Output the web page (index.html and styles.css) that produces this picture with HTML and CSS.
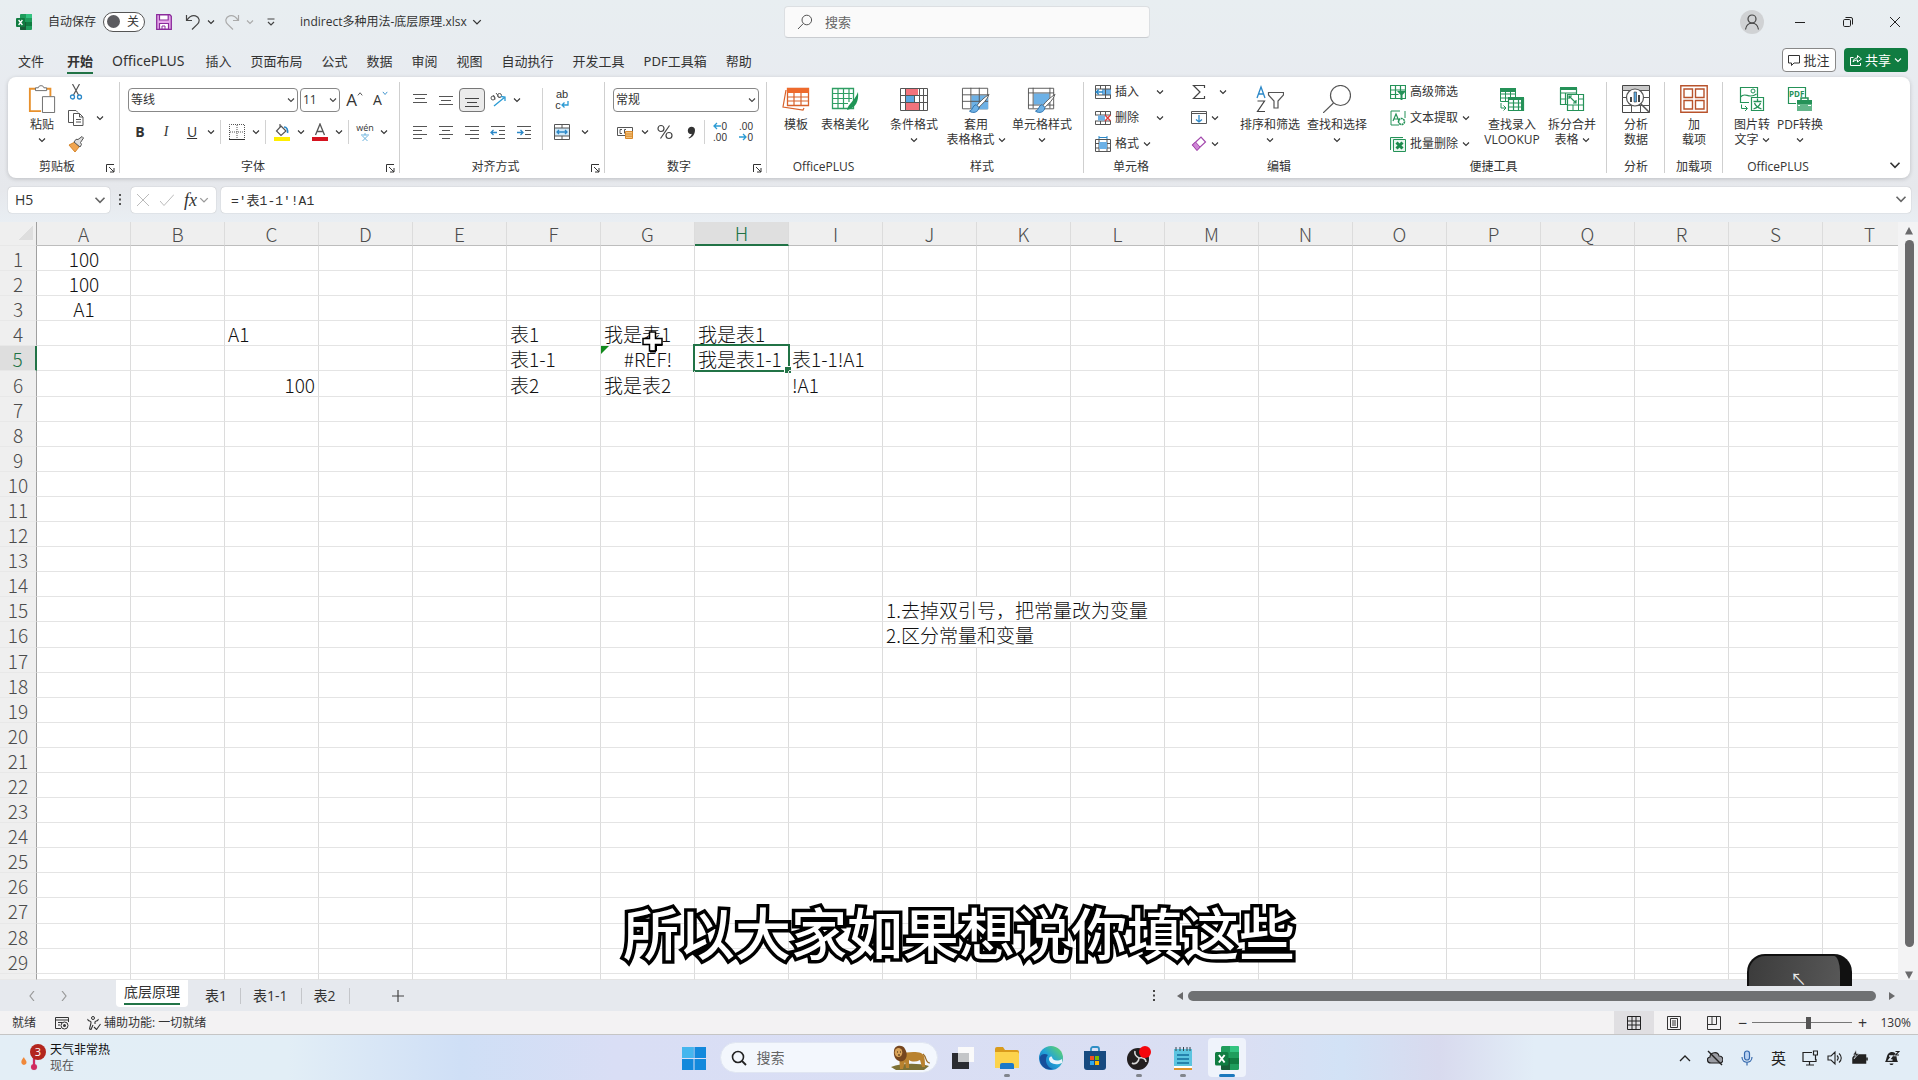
FILE: index.html
```html
<!DOCTYPE html>
<html lang="zh-CN">
<head>
	<meta charset="utf-8">
	<title>indirect多种用法-底层原理.xlsx</title>
	<link rel="stylesheet" href="styles.css">
</head>
<body>
	<!-- shared icons -->
	<svg class="sprite">
		<symbol id="chev" viewBox="0 0 8 8"><path d="M1 2.5l3 3 3-3" fill="none" stroke="currentColor" stroke-width="1.1"/></symbol>
		<symbol id="launch" viewBox="0 0 9 9"><path d="M.5 8V.5H8M3 3l5 5M8 4v4H4" fill="none" stroke="currentColor"/></symbol>
		<symbol id="excel" viewBox="0 0 16 16">
			<path d="M5 0h10a1 1 0 0 1 1 1v14a1 1 0 0 1-1 1H5a1 1 0 0 1-1-1V1a1 1 0 0 1 1-1z" fill="#1f9d5c"/>
			<path d="M10 0h5a1 1 0 0 1 1 1v3h-6z" fill="#33c481"/><path d="M4 8h6v8H5a1 1 0 0 1-1-1z" fill="#185c37"/><path d="M10 8h6v4h-6z" fill="#107c41"/>
			<rect y="4" width="9" height="9" rx="1" fill="#107c41"/><path d="M2.6 6l3.8 5M6.4 6l-3.8 5" stroke="#fff" stroke-width="1.3"/>
		</symbol>
	</svg>

	<header class="titlebar">
		<div class="title-left">
			<svg class="i16"><use href="#excel"/></svg>
			<label class="autosave">自动保存 <input type="checkbox" role="switch"><span class="switch">关</span></label>
			<button class="save" aria-label="保存"><svg class="i16" viewBox="0 0 16 16"><path d="M.7.7h13.1l1.5 1.5v13.1H.7z" fill="#e6a8ea" stroke="#8b2c9c" stroke-width="1.3"/><path d="M3.5 1h8.7v5H3.5zM3.5 9.5h9V15h-9z" fill="#fff" stroke="#8b2c9c" stroke-width="1.2"/><path d="M6 15v-3h3v3" fill="none" stroke="#8b2c9c"/></svg></button>
			<button class="undo" aria-label="撤消"><svg class="i16" viewBox="0 0 16 16"><path d="M1.5 1v5.5H7M1.8 6.3C4 3 7 .8 10.5 1.8c4 1.2 4.7 5.7 2 8.4L7 15.5" fill="none" stroke="#444" stroke-width="1.2"/></svg><svg class="chev"><use href="#chev"/></svg></button>
			<button class="redo" aria-label="恢复"><svg class="i16" viewBox="0 0 16 16"><path d="M14.5 1v5.5H9M14.2 6.3C12 3 9 .8 5.5 1.8c-4 1.2-4.7 5.7-2 8.4L9 15.5" fill="none" stroke="#aaa" stroke-width="1.2"/></svg><svg class="chev"><use href="#chev"/></svg></button>
			<button class="custom" aria-label="自定义快速访问工具栏"><svg class="chev" viewBox="0 0 8 8"><path d="M.5 1h7M1 4l3 3 3-3" fill="none" stroke="#444" stroke-width="1.2"/></svg></button>
			<button class="filename">indirect多种用法-底层原理.xlsx <svg class="i10"><use href="#chev"/></svg></button>
		</div>
		<label class="search">
			<svg class="i16" viewBox="0 0 16 16"><circle cx="9.8" cy="6" r="4.8" fill="none" stroke="#555"/><path d="M6.3 9.5L1 15" stroke="#555"/></svg>
			<input type="text" placeholder="搜索" aria-label="搜索">
		</label>
		<div class="title-right">
			<button class="avatar" aria-label="帐户"><svg class="i16" viewBox="0 0 16 16"><circle cx="8" cy="5" r="4" fill="none" stroke="#444" stroke-width="1.2"/><path d="M1.5 15.5C2.5 7 13.5 7 14.5 15.5" fill="none" stroke="#444" stroke-width="1.2"/></svg></button>
			<button class="win" aria-label="最小化"><svg class="i10" viewBox="0 0 10 10"><path d="M0 5.5h10" stroke="#222"/></svg></button>
			<button class="win" aria-label="还原"><svg class="i10" viewBox="0 0 10 10"><rect x=".5" y="2.5" width="7" height="7" rx="1.2" fill="none" stroke="#222"/><path d="M2.5.5H8A1.5 1.5 0 0 1 9.5 2v5.5" fill="none" stroke="#222"/></svg></button>
			<button class="win" aria-label="关闭"><svg class="i10" viewBox="0 0 10 10"><path d="M0 0l10 10M10 0L0 10" stroke="#222"/></svg></button>
		</div>
	</header>

	<nav class="tabs">
		<a href="#">文件</a>
		<a href="#" class="active">开始</a>
		<a href="#" class="addin">OfficePLUS</a>
		<a href="#">插入</a>
		<a href="#">页面布局</a>
		<a href="#">公式</a>
		<a href="#">数据</a>
		<a href="#">审阅</a>
		<a href="#">视图</a>
		<a href="#">自动执行</a>
		<a href="#">开发工具</a>
		<a href="#">PDF工具箱</a>
		<a href="#">帮助</a>
		<button class="comment"><svg class="i12" viewBox="0 0 12 12"><path d="M.5 1.5h11V9H6l-2.5 2.5V9h-3z" fill="none" stroke="#333"/></svg>批注</button>
		<button class="share"><svg class="i12" viewBox="0 0 12 12"><path d="M3.5 3.5h-3v8h10V9M3 8c.5-3 2-4 4.5-4V1.5L11.5 5 7.5 8V6C5.5 6 4.5 6.5 3 8z" fill="none" stroke="#fff"/></svg>共享<svg class="chev"><use href="#chev"/></svg></button>
	</nav>

	<section class="ribbon">
		<div class="group clipboard">
			<div class="body">
				<button class="big"><svg class="i30" viewBox="0 0 28 30"><path d="M7 4H1v24h12M19 4h4v8" fill="none" stroke="#e8912d" stroke-width="2"/><path d="M7 6V3h3c0-3 6-3 6 0h3v3z" fill="#fff" stroke="#666"/><path d="M14.5 12.5h13v17h-13z" fill="#fff" stroke="#666"/></svg><span>粘贴</span><svg class="chev"><use href="#chev"/></svg></button>
				<div class="stack">
					<button class="small" aria-label="剪切"><svg class="i16" viewBox="0 0 16 16"><path d="M4.5 0l6 11M11.5 0l-6 11" stroke="#555" stroke-width="1.2"/><circle cx="4.5" cy="13" r="2" fill="none" stroke="#2b88c8" stroke-width="1.3"/><circle cx="11.5" cy="13" r="2" fill="none" stroke="#2b88c8" stroke-width="1.3"/></svg></button>
					<button class="small" aria-label="复制"><svg class="i16" viewBox="0 0 16 16"><path d="M5 12.5H.5V.5H8l2 2" fill="none" stroke="#555"/><path d="M5.5 3.5h6l3.5 3.5v8.5H5.5zM11.5 3.5V7H15M8 9.5h5M8 12h5" fill="#fff" stroke="#555"/></svg><svg class="chev push"><use href="#chev"/></svg></button>
					<button class="small" aria-label="格式刷"><svg class="i16" viewBox="0 0 16 16"><path d="M1 9l6-3 4 5-4 5z" fill="#f0a550" stroke="#d5852a"/><path d="M6 6l6 5 1.5-2.5-1-2L15.5 2 14 .5 10 3.5 8 3.3z" fill="#ddd" stroke="#555"/></svg></button>
				</div>
			</div>
			<footer><span>剪贴板</span><button class="launch" aria-label="剪贴板设置"><svg><use href="#launch"/></svg></button></footer>
		</div>

		<div class="group font">
			<div class="body rows">
				<div class="row">
					<select class="font-name" aria-label="字体"><option>等线</option></select>
					<select class="font-size" aria-label="字号"><option>11</option></select>
					<button class="ib" aria-label="增大字号"><span class="grow">A</span><svg class="mark" viewBox="0 0 8 8"><path d="M1 5l2.5-3L6 5" fill="none" stroke="#444"/></svg></button>
					<button class="ib" aria-label="减小字号"><span class="shrink">A</span><svg class="mark" viewBox="0 0 8 8"><path d="M1 1l2.5 3L6 1" fill="none" stroke="#2b88c8"/></svg></button>
				</div>
				<div class="row">
					<button class="ib"><b>B</b></button><button class="ib"><i>I</i></button><button class="ib"><u>U</u></button><button class="drop" aria-label="下划线"><svg class="chev"><use href="#chev"/></svg></button>
					<span class="sep"></span>
					<button class="ib" aria-label="边框"><svg class="i16" viewBox="0 0 16 16"><path d="M.5 15V.5h15V15M8 1v14M1 8h14" fill="none" stroke="#555" stroke-dasharray="1 1"/><path d="M0 15.5h16" stroke="#333"/></svg></button><button class="drop" aria-label="边框样式"><svg class="chev"><use href="#chev"/></svg></button>
					<span class="sep"></span>
					<button class="ib" aria-label="填充颜色"><svg class="i18" viewBox="0 0 18 18"><path d="M7 1v4M8 3l5 5-5 4.5L3.5 8z" fill="none" stroke="#555" stroke-width="1.2"/><path d="M11 4c3 0 4 3 3.5 6" fill="none" stroke="#2b88c8" stroke-width="1.6"/><path d="M1 14h16v4H1z" fill="#ffee00"/></svg></button><button class="drop" aria-label="选择填充颜色"><svg class="chev"><use href="#chev"/></svg></button>
					<button class="ib" aria-label="字体颜色"><svg class="i18" viewBox="0 0 18 18"><path d="M4.5 12L9 1l4.5 11M6 8.5h6" fill="none" stroke="#555" stroke-width="1.3"/><path d="M1 14h16v4H1z" fill="#d5131f"/></svg></button><button class="drop" aria-label="选择字体颜色"><svg class="chev"><use href="#chev"/></svg></button>
					<span class="sep"></span>
					<button class="ib pinyin"><span>wén</span><svg class="i8" viewBox="0 0 8 8"><path d="M4 0v2M0 2h8M1.5 3l5 5M6.5 3l-5 5" fill="none" stroke="#6ab3de"/></svg></button><button class="drop" aria-label="拼音选项"><svg class="chev"><use href="#chev"/></svg></button>
				</div>
			</div>
			<footer><span>字体</span><button class="launch" aria-label="字体设置"><svg><use href="#launch"/></svg></button></footer>
		</div>

		<div class="group align">
			<div class="body">
				<div class="rows">
					<div class="row">
						<button class="ib" aria-label="顶端对齐"><svg class="i16" viewBox="0 0 16 16"><path d="M1 2.5h14M3 6.5h10M1 10.5h14" stroke="#555"/></svg></button>
						<button class="ib" aria-label="垂直居中"><svg class="i16" viewBox="0 0 16 16"><path d="M1 4.5h14M3 8.5h10M1 12.5h14" stroke="#555"/></svg></button>
						<button class="ib on" aria-label="底端对齐"><svg class="i16" viewBox="0 0 16 16"><path d="M1 6.5h14M3 10.5h10M1 14.5h14" stroke="#444"/></svg></button>
						<button class="ib" aria-label="方向"><svg class="i16" viewBox="0 0 16 16"><circle cx="3" cy="6" r="2" fill="none" stroke="#555"/><path d="M5 7.5L3.5 3M6 1l4 5" stroke="#555"/><circle cx="9.5" cy="3.5" r="2" fill="none" stroke="#555"/><path d="M4 14L15 5M11 4.5l4 .5v4" fill="none" stroke="#2b9bd4" stroke-width="1.3"/></svg></button><button class="drop" aria-label="方向选项"><svg class="chev"><use href="#chev"/></svg></button>
					</div>
					<div class="row">
						<button class="ib" aria-label="左对齐"><svg class="i16" viewBox="0 0 16 16"><path d="M1 2.5h14M1 6.5h9M1 10.5h14M1 14.5h9" stroke="#555"/></svg></button>
						<button class="ib" aria-label="居中"><svg class="i16" viewBox="0 0 16 16"><path d="M1 2.5h14M4 6.5h8M1 10.5h14M4 14.5h8" stroke="#555"/></svg></button>
						<button class="ib" aria-label="右对齐"><svg class="i16" viewBox="0 0 16 16"><path d="M1 2.5h14M6 6.5h9M1 10.5h14M6 14.5h9" stroke="#555"/></svg></button>
						<button class="ib" aria-label="减少缩进"><svg class="i16" viewBox="0 0 16 16"><path d="M1 2.5h14M9 6.5h6M9 10.5h6M1 14.5h14" stroke="#555"/><path d="M7 8.5H1M3.5 6L1 8.5 3.5 11" fill="none" stroke="#2b88c8" stroke-width="1.3"/></svg></button>
						<button class="ib" aria-label="增加缩进"><svg class="i16" viewBox="0 0 16 16"><path d="M1 2.5h14M9 6.5h6M9 10.5h6M1 14.5h14" stroke="#555"/><path d="M1 8.5h6M4.5 6L7 8.5 4.5 11" fill="none" stroke="#2b88c8" stroke-width="1.3"/></svg></button>
					</div>
				</div>
				<span class="sep tall"></span>
				<div class="rows">
					<div class="row"><button class="ib wrap" aria-label="自动换行"><span>ab</span><span>c<svg class="i8" viewBox="0 0 8 8"><path d="M7 0v4H1M3.5 1.5L1 4l2.5 2.5" fill="none" stroke="#2b9bd4" stroke-width="1.3"/></svg></span></button></div>
					<div class="row merge"><button class="ib" aria-label="合并后居中"><svg class="i16" viewBox="0 0 16 16"><path d="M.5.5h15v15H.5z" fill="#fff" stroke="#555"/><path d="M1 4h14v8H1z" fill="#cfe8f8"/><path d="M.5 4h15M.5 12h15M8 .5V4M8 12v3.5" stroke="#555"/><path d="M3 8h10M5 6L3 8l2 2M11 6l2 2-2 2" fill="none" stroke="#2b88c8" stroke-width="1.3"/></svg></button><button class="drop" aria-label="合并选项"><svg class="chev"><use href="#chev"/></svg></button></div>
				</div>
			</div>
			<footer><span>对齐方式</span><button class="launch" aria-label="对齐设置"><svg><use href="#launch"/></svg></button></footer>
		</div>

		<div class="group number">
			<div class="body rows">
				<div class="row"><select class="format" aria-label="数字格式"><option>常规</option></select></div>
				<div class="row">
					<button class="ib" aria-label="会计数字格式"><svg class="i16" viewBox="0 0 16 16"><path d="M.5 3.5h15v8H.5z" fill="#fff" stroke="#555"/><path d="M5 5.5H3v4h2M9 5.5H7.5v4" fill="none" stroke="#555"/><path d="M8.5 7.5h7v7h-7z" fill="#f3c27c" stroke="#d8892b"/><path d="M8.5 10h7M8.5 12.2h7" stroke="#d8892b"/></svg></button><button class="drop" aria-label="货币"><svg class="chev"><use href="#chev"/></svg></button>
					<button class="ib" aria-label="百分比"><svg class="i16" viewBox="0 0 16 16"><circle cx="4" cy="4.5" r="3" fill="none" stroke="#444" stroke-width="1.2"/><circle cx="12" cy="11.5" r="3" fill="none" stroke="#444" stroke-width="1.2"/><path d="M12.5 1.5l-9 13" stroke="#444" stroke-width="1.2"/></svg></button>
					<button class="ib" aria-label="千位分隔"><svg class="i16" viewBox="0 0 16 16"><path d="M12 6c0 4-2.5 7.5-6 8.5l-.5-.8c2-.9 3-2.2 3.3-4C6.5 10.5 4.8 9 4.8 6.5c0-5 7.2-5 7.2-.5z" fill="#333"/></svg></button>
					<span class="sep"></span>
					<button class="ib dec" aria-label="增加小数位"><span><svg class="i8" viewBox="0 0 8 8"><path d="M8 4H1M4 1L1 4l3 3" fill="none" stroke="#2b9bd4" stroke-width="1.3"/></svg>0</span><span>.00</span></button>
					<button class="ib dec" aria-label="减少小数位"><span>.00</span><span><svg class="i8" viewBox="0 0 8 8"><path d="M0 4h7M4 1l3 3-3 3" fill="none" stroke="#2b9bd4" stroke-width="1.3"/></svg>0</span></button>
				</div>
			</div>
			<footer><span>数字</span><button class="launch" aria-label="数字设置"><svg><use href="#launch"/></svg></button></footer>
		</div>

		<div class="group office borderless">
			<div class="body">
				<button class="big w40"><svg class="i28" viewBox="0 0 28 28"><path d="M4 5L1 22l20 3 1-2" fill="none" stroke="#d8622b" stroke-width="1.2"/><path d="M5.5 3.5h21v17h-21z" fill="#fff" stroke="#d8622b" stroke-width="1.3"/><path d="M5 3h22v5H5z" fill="#ee6a2c"/><path d="M5 12h22M5 16h22M12 8v12M19 8v12" stroke="#d8622b" stroke-width="1.2"/></svg><span>模板</span></button>
				<button class="big w58"><svg class="i28" viewBox="0 0 28 28"><path d="M1.5 3.5h21v20h-21z" fill="#fff" stroke="#2f9e63" stroke-width="1.3"/><path d="M1 8.5h22M1 13.5h20M1 18.5h16M7 3v21M12.5 3v21M18 3v14" stroke="#2f9e63" stroke-width="1.2"/><path d="M27 7c1 9-2 16-11 18 1-6 7-8 11-18z" fill="#1f9455"/></svg><span>表格美化</span></button>
			</div>
			<footer><span>OfficePLUS</span></footer>
		</div>

		<div class="group styles">
			<div class="body">
				<button class="big w62"><svg class="i28" viewBox="0 0 28 28"><path d="M.5 3.5h27v22H.5z" fill="#fff" stroke="#555"/><path d="M6 4h12v6H6zM6 18h14v7H6z" fill="#f2727c"/><path d="M6 11h8v6H6z" fill="#5aa7e0"/><path d="M0 10.5h28M0 17.5h28M5.5 3v22M14.5 10v8M19.5 3v22M23.5 3v22" stroke="#555"/></svg><span>条件格式</span><svg class="chev"><use href="#chev"/></svg></button>
				<button class="big w62"><svg class="i30" viewBox="0 0 30 30"><path d="M.5 3.5h27v22H.5z" fill="#fff" stroke="#555"/><path d="M10 11h18v15H10z" fill="#6db1e6"/><path d="M0 10.5h28M0 17.5h28M9.5 3v22M18.5 3v22" stroke="#555"/><path d="M29 10c-6 4-10 8-13 12l2 2c4-4 9-8 11-14z" fill="#fff" stroke="#555"/><path d="M15 21c-4 1-3 6-7 7 4 3 10 1 10-4z" fill="#6db1e6" stroke="#2f73ad"/></svg><span>套用</span><span>表格格式 <svg class="chev"><use href="#chev"/></svg></span></button>
				<button class="big w70"><svg class="i30" viewBox="0 0 30 30"><path d="M.5 3.5h27v22H.5z" fill="#fff" stroke="#555"/><path d="M6 9h17v12H6z" fill="#6db1e6"/><path d="M0 8.5h28M0 21.5h28M5.5 3v22M23.5 3v22" stroke="#555"/><path d="M29 10c-6 4-10 8-13 12l2 2c4-4 9-8 11-14z" fill="#fff" stroke="#555"/><path d="M15 21c-4 1-3 6-7 7 4 3 10 1 10-4z" fill="#6db1e6" stroke="#2f73ad"/></svg><span>单元格样式</span><svg class="chev"><use href="#chev"/></svg></button>
			</div>
			<footer><span>样式</span></footer>
		</div>

		<div class="group cells borderless">
			<div class="body">
				<div class="stack">
					<button class="small"><svg class="i16" viewBox="0 0 16 16"><path d="M.5 1.5h15v13H.5z" fill="#fff" stroke="#555"/><path d="M7 5h9v6H7z" fill="#6db1e6"/><path d="M0 5h16M0 11h16M5.5 1v4M10.5 1v14" stroke="#555"/><path d="M8 8H1M4 5.5L1 8l3 2.5" fill="none" stroke="#2b88c8" stroke-width="1.3"/></svg>插入<svg class="chev push"><use href="#chev"/></svg></button>
					<button class="small"><svg class="i16" viewBox="0 0 16 16"><path d="M.5 5V1.5h15V5M.5 11v3.5h15V11M5.5 1v4M10.5 1v4M5.5 11v4M10.5 11v4M0 5h16M0 11h16" fill="none" stroke="#555"/><path d="M3 5.5h7v5H3z" fill="#6db1e6"/><path d="M10 5l5.5 6M15.5 5L10 11" stroke="#dd3c3c" stroke-width="1.3"/></svg>删除<svg class="chev push"><use href="#chev"/></svg></button>
					<button class="small"><svg class="i16" viewBox="0 0 16 16"><path d="M.5 3.5h15v12H.5zM.5 7.5h15M.5 12h15M4 3v12M12 3v12" fill="#fff" stroke="#555"/><path d="M4 6h8v7H4z" fill="#6db1e6"/><path d="M4 1.5h8M4 0v3M12 0v3" stroke="#2b88c8"/></svg>格式<svg class="chev"><use href="#chev"/></svg></button>
				</div>
			</div>
			<footer><span>单元格</span></footer>
		</div>

		<div class="group editing borderless">
			<div class="body">
				<div class="stack">
					<button class="small sum" aria-label="求和"><svg class="i16" viewBox="0 0 16 16"><path d="M13.5 4V1.5h-11L9 8l-6.5 6.5h11V12" fill="none" stroke="#444" stroke-width="1.2"/></svg><svg class="chev push"><use href="#chev"/></svg></button>
					<button class="small" aria-label="填充"><svg class="i16" viewBox="0 0 16 16"><path d="M.5 1.5h15v12H.5zM.5 3.5h15" fill="#fff" stroke="#555"/><path d="M8 5v7M5 9.5l3 2.5 3-2.5" fill="none" stroke="#2b88c8" stroke-width="1.3"/></svg><svg class="chev"><use href="#chev"/></svg></button>
					<button class="small" aria-label="清除"><svg class="i16" viewBox="0 0 16 16"><path d="M1.5 9L10 1l4.5 5-8.5 8z" fill="#fff" stroke="#a349ad" stroke-width="1.2"/><path d="M1.5 9l3-3L9 11l-3 3.5z" fill="#cf86d6" stroke="#a349ad"/></svg><svg class="chev"><use href="#chev"/></svg></button>
				</div>
				<button class="big w64"><svg class="i28" viewBox="0 0 28 28"><path d="M1 13L5 2l4 11M2.5 9h5" fill="none" stroke="#2b88c8" stroke-width="1.3"/><path d="M1.5 16h7l-7 10.5h7.5" fill="none" stroke="#444" stroke-width="1.2"/><path d="M12.5 7.5h15V10l-5.5 6v7h-4v-7l-5.5-6z" fill="none" stroke="#555" stroke-width="1.2"/></svg><span>排序和筛选</span><svg class="chev"><use href="#chev"/></svg></button>
				<button class="big w70"><svg class="i28" viewBox="0 0 28 28"><circle cx="17.5" cy="10.5" r="10" fill="none" stroke="#555" stroke-width="1.2"/><path d="M10.5 18L0 28" stroke="#555" stroke-width="1.2"/></svg><span>查找和选择</span><svg class="chev"><use href="#chev"/></svg></button>
			</div>
			<footer><span>编辑</span></footer>
		</div>

		<div class="group tools">
			<div class="body">
				<div class="stack">
					<button class="small"><svg class="i16" viewBox="0 0 16 16"><path d="M.5 1.5h15v13H.5zM.5 6h15M.5 10.5h8M5.5 1.5v13M10.5 1.5V7" fill="#fff" stroke="#259258" stroke-width="1.2"/><path d="M7 7h9l-3.5 4v5h-2v-5z" fill="#259258"/></svg>高级筛选</button>
					<button class="small"><svg class="i16" viewBox="0 0 16 16"><path d="M10 1H1v14h8M15 1v7" fill="none" stroke="#259258"/><path d="M3 11l3-7 3 7M4 9h4" fill="none" stroke="#259258" stroke-width="1.2"/><circle cx="11.5" cy="11.5" r="3" fill="none" stroke="#259258" stroke-width="1.6" stroke-dasharray="2 .6"/></svg>文本提取<svg class="chev"><use href="#chev"/></svg></button>
					<button class="small"><svg class="i16" viewBox="0 0 16 16"><path d="M.5 14V1.5H13M3.5 3.5h12v12h-12z" fill="#eaf6ef" stroke="#259258"/><path d="M6.5 6.5l6 6M12.5 6.5l-6 6" stroke="#1c8a4c" stroke-width="3"/></svg>批量删除<svg class="chev"><use href="#chev"/></svg></button>
				</div>
				<button class="big w64"><svg class="i28" viewBox="0 0 28 28"><path d="M2.5 4.5h15v12h-15zM2.5 9h15M2.5 13h15M7.5 4v12M12.5 4v12" fill="#fff" stroke="#259258"/><path d="M2 3h16v4H2z" fill="#259258"/><path d="M10.5 13.5h15v12h-15zM10.5 18h15M10.5 22h15M15.5 13v12M20.5 13v12" fill="#fff" stroke="#259258" stroke-width="1.2"/><path d="M10 12h16v3H10zM23 12h3v14h-3z" fill="#259258"/><path d="M3 18v5h5M5.5 20.5L8 23l-2.5 2.5" fill="none" stroke="#259258"/></svg><span>查找录入</span><span>VLOOKUP</span></button>
				<button class="big w56"><svg class="i28" viewBox="0 0 28 28"><path d="M2.5 3.5h16v16h-16zM2.5 8h16M2.5 14h6M7.5 8v12" fill="#fff" stroke="#259258" stroke-width="1.2"/><path d="M2 2h17v3H2z" fill="#259258"/><path d="M9.5 9.5h16v16h-16z" fill="#fff" stroke="#259258" stroke-width="1.2"/><path d="M10 20h16M15 20v6M20.5 10v16M20 14h6" stroke="#259258"/><path d="M11 11l7 7M11 14v-3h3M18 15v3h-3" fill="none" stroke="#259258" stroke-width="1.2"/></svg><span>拆分合并</span><span>表格 <svg class="chev"><use href="#chev"/></svg></span></button>
			</div>
			<footer><span>便捷工具</span></footer>
		</div>

		<div class="group slim">
			<div class="body"><button class="big"><svg class="i28" viewBox="0 0 28 28"><path d="M.5.5h27v27H.5z" fill="#fff" stroke="#444"/><path d="M1 1h26v4H1z" fill="#c9c9c9"/><path d="M0 5.5h28M0 12.5h28M0 20.5h28M9.5 20v8M18.5 20v8" stroke="#555"/><circle cx="13" cy="12.5" r="8.5" fill="#fff" stroke="#555" stroke-width="1.2"/><path d="M9 12v5M17 10v7" stroke="#444" stroke-width="2"/><path d="M12 7h2.5v10H12z" fill="#5aa7e0" stroke="#333" stroke-width=".6"/><path d="M19 19l8.5 8.5" stroke="#555" stroke-width="1.5"/></svg><span>分析</span><span>数据</span></button></div>
			<footer><span>分析</span></footer>
		</div>

		<div class="group slim">
			<div class="body"><button class="big"><svg class="i28" viewBox="0 0 28 28"><path d="M.8.8h26.4v26.4H.8zM4 4h8.5v8.5H4zM15.5 4H24v8.5h-8.5zM4 15.5h8.5V24H4zM15.5 15.5H24V24h-8.5z" fill="none" stroke="#b8532c" stroke-width="1.4"/></svg><span>加</span><span>载项</span></button></div>
			<footer><span>加载项</span></footer>
		</div>

		<div class="group convert borderless">
			<div class="body">
				<button class="big w48"><svg class="i28" viewBox="0 0 28 28"><path d="M11 17.5H2.5v-15h17V12M2.5 12c5-6 8 3 16-3" fill="none" stroke="#259258" stroke-width="1.2"/><circle cx="15" cy="6" r="2" fill="none" stroke="#259258"/><path d="M3.5 19.5v4H9M7 21l2.5 2.5L7 26" fill="none" stroke="#259258"/><path d="M13.5 12.5h12v13h-12z" fill="#fff" stroke="#259258" stroke-width="1.2"/><path d="M19.5 13.5v2.5M15.5 16.5h8M16.5 18c1 3 4 5 7 6M22.5 18c-1 3-4 5-7 6" fill="none" stroke="#259258" stroke-width="1.3"/></svg><span>图片转</span><span>文字 <svg class="chev"><use href="#chev"/></svg></span></button>
				<button class="big w48"><svg class="i28" viewBox="0 0 28 28"><path d="M10 18.5H2.5v-16h17V13" fill="none" stroke="#259258" stroke-width="1.2"/><text x="3" y="12" class="pdf">PDF</text><path d="M15 15v-2h7v2" fill="none" stroke="#259258" stroke-width="1.5"/><path d="M11 15h15v11H11z" fill="#63b68a"/><path d="M11 15h15v4H11z" fill="#259258"/><path d="M12 20.5h2M22 20.5h3" stroke="#fff"/></svg><span>PDF转换</span><svg class="chev"><use href="#chev"/></svg></button>
			</div>
			<footer><span>OfficePLUS</span></footer>
		</div>
		<button class="collapse" aria-label="折叠功能区"><svg class="i12"><use href="#chev"/></svg></button>
	</section>

	<section class="formula-bar">
		<div class="box name-box"><input type="text" value="H5" aria-label="名称框"><svg class="i12"><use href="#chev"/></svg></div>
		<svg class="dots" viewBox="0 0 3 12"><path d="M0 1h2M0 5.5h2M0 10h2" stroke="#555" stroke-width="2"/></svg>
		<div class="box fx">
			<button aria-label="取消"><svg class="i14" viewBox="0 0 14 14"><path d="M1 1l12 12M13 1L1 13" stroke="#bbb"/></svg></button>
			<button aria-label="输入"><svg class="i14" viewBox="0 0 14 14"><path d="M0 8l4 4.5L14 1.5" fill="none" stroke="#bbb"/></svg></button>
			<button class="fx-btn">fx</button>
			<svg class="i10 dim"><use href="#chev"/></svg>
		</div>
		<div class="box formula"><input type="text" value="='表1-1'!A1" aria-label="编辑栏"><svg class="i12"><use href="#chev"/></svg></div>
	</section>

	<main class="sheet">
		<div class="grid-view">
			<table id="grid"></table>
			<svg class="cursor" viewBox="0 0 22 22"><path d="M7.5 1h6v6.5H20v6h-6.5V20h-6v-6.5H1v-6h6.5z" fill="#fff" stroke="#000" stroke-width="1.5"/><path d="M14 20.5H8M20.5 14H14v6" fill="none" stroke="#000" stroke-width="2"/></svg>
		</div>
		<div class="vscroll">
			<svg class="i8" viewBox="0 0 8 8"><path d="M4 0l4 7.5H0z" fill="#6a6a6c"/></svg>
			<span class="thumb"></span>
			<svg class="i8" viewBox="0 0 8 8"><path d="M4 8L0 .5h8z" fill="#6a6a6c"/></svg>
		</div>
	</main>

	<nav class="sheet-tabs">
		<button class="step" aria-label="上一个"><svg class="i10" viewBox="0 0 10 10"><path d="M7 0L3 5l4 5" fill="none" stroke="#999" stroke-width="1.2"/></svg></button>
		<button class="step" aria-label="下一个"><svg class="i10" viewBox="0 0 10 10"><path d="M3 0l4 5-4 5" fill="none" stroke="#999" stroke-width="1.2"/></svg></button>
		<a href="#" class="current"><span>底层原理</span></a>
		<a href="#">表1</a>
		<a href="#">表1-1</a>
		<a href="#">表2</a>
		<button class="add" aria-label="新工作表"><svg class="i12" viewBox="0 0 12 12"><path d="M6 0v12M0 6h12" stroke="#444" stroke-width="1.2"/></svg></button>
		<div class="hscroll">
			<svg class="dots" viewBox="0 0 3 12"><path d="M0 1h2M0 5.5h2M0 10h2" stroke="#444" stroke-width="2"/></svg>
			<svg class="i8" viewBox="0 0 8 8"><path d="M1 4l6-4v8z" fill="#6a6a6c"/></svg>
			<span class="thumb"></span>
			<svg class="i8" viewBox="0 0 8 8"><path d="M7 4L1 0v8z" fill="#6a6a6c"/></svg>
		</div>
	</nav>

	<footer class="status">
		<span class="ready">就绪</span>
		<svg class="i14" viewBox="0 0 14 14"><path d="M6 12.5H.5v-11h13V6M.5 4h13M3 6.5h4M3 9h2" fill="none" stroke="#333"/><circle cx="9.5" cy="9.5" r="3.5" fill="none" stroke="#333"/><circle cx="9.5" cy="9.5" r="1.5" fill="#333"/></svg>
		<button class="access"><svg class="i14" viewBox="0 0 14 14"><circle cx="6" cy="2" r="1.5" fill="none" stroke="#333"/><path d="M1 3c-1 2 3 2 3 3 0 3-1 4-1.5 7l1.5.5 2-4.5M11 3c1 2-3 2-3 3v2M7 11l2.5 2.5L13.5 8" fill="none" stroke="#333" stroke-width="1.1"/></svg>辅助功能: 一切就绪</button>
		<div class="views">
			<button class="view on" aria-label="普通"><svg class="i14" viewBox="0 0 14 14"><path d="M.5.5h13v13H.5zM.5 5h13M.5 9h13M5 .5v13M9 .5v13" fill="none" stroke="#222"/></svg></button>
			<button class="view" aria-label="页面布局"><svg class="i14" viewBox="0 0 14 14"><path d="M.5.5h13v13H.5zM3.5 2.5h7v9h-7zM5 5h4M5 7h4M5 9h4" fill="none" stroke="#333"/></svg></button>
			<button class="view" aria-label="分页预览"><svg class="i14" viewBox="0 0 14 14"><path d="M.5.5h13v13H.5zM.5 8.5h9V.5M5 .5v8" fill="none" stroke="#333"/></svg></button>
			<button class="zoom-step" aria-label="缩小">−</button>
			<input type="range" min="0" max="100" value="56" aria-label="缩放">
			<button class="zoom-step" aria-label="放大">+</button>
			<span class="percent">130%</span>
		</div>
	</footer>

	<footer class="taskbar">
		<button class="weather">
			<svg class="thermo" viewBox="0 0 26 28"><path d="M4 21c-4-1-3-5 0-8 0 2 4 4 2 7z" fill="#f0883a"/><path d="M12 10h4v10a3.5 3.5 0 1 1-4 0z" fill="#d9d3e6"/><circle cx="14" cy="23" r="3" fill="#d02a5f"/><path d="M14 12v10" stroke="#d02a5f" stroke-width="2"/><circle cx="18" cy="8" r="8" fill="#b3261e"/><text x="18" y="12" class="badge">3</text></svg>
			<span><span>天气非常热</span><span class="muted">现在</span></span>
		</button>
		<div class="apps">
			<button class="app" aria-label="开始"><svg class="i24" viewBox="0 0 24 24"><path d="M0 1h11.5v11H0zM12.5 1H24v11H12.5zM0 13h11.5v11H0zM12.5 13H24v11H12.5z" fill="#1389dc"/><path d="M0 1h11.5v11H0z" fill="#45b6ee"/></svg></button>
			<label class="task-search">
				<svg class="i16" viewBox="0 0 16 16"><circle cx="7" cy="7" r="5.5" fill="none" stroke="#222" stroke-width="1.6"/><path d="M11 11l4 4" stroke="#222" stroke-width="1.8"/></svg>
				<input type="text" placeholder="搜索" aria-label="任务栏搜索">
				<svg class="lion" viewBox="0 0 42 26"><path d="M1 22c10-4 28-4 38-1l-5 4H6z" fill="#7d7136"/><path d="M9 9c8-2 16-3 22-1 4 2 4 7 4 14h-3l-2-7c-4 2-8 2-11 0v8h-3l-1-6-2 7H10z" fill="#b9822f"/><path d="M33 9c4 3 2 9 7 9" fill="none" stroke="#9a6a25" stroke-width="1.2"/><path d="M4 6C4 0 13-1 15 4c3 5 2 10-2 12-6 2-10-4-9-10z" fill="#76461e"/><ellipse cx="8.5" cy="7.5" rx="3.8" ry="4.5" fill="#d9a45a"/><path d="M7 7h1M10 7h1M8 10h2" stroke="#3b2410"/></svg>
			</label>
			<button class="app" aria-label="任务视图"><svg class="i24" viewBox="0 0 24 24"><path d="M7 1h16v15H7z" fill="#fafafa"/><path d="M1 7h17v16H1z" fill="#2a2c31"/><path d="M7 7h11v9H7z" fill="#c4c6c8"/></svg></button>
			<button class="app open" aria-label="文件资源管理器"><svg class="i24" viewBox="0 0 24 24"><path d="M0 3a2 2 0 0 1 2-2h6l2 3h12a2 2 0 0 1 2 2v4H0z" fill="#d99b1c"/><path d="M0 6h22a2 2 0 0 1 2 2v14H0z" fill="#fcd34c"/><path d="M5 23v-4a2 2 0 0 1 2-2h10a2 2 0 0 1 2 2v4z" fill="#1b79c9"/></svg></button>
			<button class="app" aria-label="Edge"><svg class="i24" viewBox="0 0 24 24"><defs><linearGradient id="edge" x1="0" y1="1" x2="1" y2="0"><stop offset="0" stop-color="#1463b5"/><stop offset=".5" stop-color="#22a3d8"/><stop offset="1" stop-color="#6bdc58"/></linearGradient></defs><circle cx="12" cy="12" r="12" fill="url(#edge)"/><path d="M23 17c-7 3-13 0-13-4 0-2 2-3 3-2 0 3 5 5 10 2v4z" fill="#e8f2fb"/><path d="M9 9c-4 4-2 12 5 14C5 25 0 18 1 11c1-3 5-4 8-2z" fill="#164f9c"/></svg></button>
			<button class="app" aria-label="Microsoft Store"><svg class="i24" viewBox="0 0 24 24"><path d="M8 6V3a2 2 0 0 1 2-2h4a2 2 0 0 1 2 2v3" fill="none" stroke="#2f8fc5" stroke-width="1.8"/><path d="M1 5h22v16a3 3 0 0 1-3 3H4a3 3 0 0 1-3-3z" fill="#174a80"/><path d="M7 10h4v4H7z" fill="#f25022"/><path d="M12 10h4v4h-4z" fill="#7fba00"/><path d="M7 15h4v4H7z" fill="#31a8ee"/><path d="M12 15h4v4h-4z" fill="#ffb900"/></svg></button>
			<button class="app open" aria-label="OBS"><svg class="i24" viewBox="0 0 24 24"><circle cx="11" cy="13" r="11" fill="#231f20"/><path d="M8 5c-1 4 2 6 4 7M12 12c4-1 7 1 7 4M12 12c0 4-4 7-7 5" fill="none" stroke="#d7d7d7" stroke-width="1.6"/><circle cx="18" cy="6" r="6" fill="#f5060c"/></svg></button>
			<button class="app open" aria-label="记事本"><svg class="i24" viewBox="0 0 24 24"><path d="M3 3h18v18H3z" fill="#5cc4e0"/><path d="M3 20h18v2H3z" fill="#fff"/><path d="M3 22h18v2H3z" fill="#e0962d"/><path d="M6 9h12M6 13h12M6 17h12" stroke="#136c9c" stroke-width="1.5"/><path d="M5 1v4M9 1v4M12.5 1v4M16 1v4M19 1v4" stroke="#35444d"/></svg></button>
			<button class="app open front" aria-label="Excel"><svg class="i24"><use href="#excel"/></svg></button>
		</div>
		<div class="tray">
			<svg class="i12" viewBox="0 0 12 12"><path d="M1 9l5-5 5 5" fill="none" stroke="#222" stroke-width="1.3"/></svg>
			<svg class="i16" viewBox="0 0 16 16"><path d="M4 13C0 13-1 8 3 7c0-5 8-6 9-1 5 0 5 7 1 7z" fill="#9a9ca3" stroke="#222" stroke-width="1.2"/><path d="M1 1l14 14" stroke="#222" stroke-width="1.4"/></svg>
			<svg class="i16" viewBox="0 0 16 16"><rect x="5.5" y="1" width="5" height="9" rx="2.5" fill="#b9d2f2" stroke="#3569ad" stroke-width="1.2"/><path d="M3 7c0 7 10 7 10 0M8 12v3.5" fill="none" stroke="#3569ad" stroke-width="1.2"/></svg>
			<button class="ime">英</button>
			<div class="quick">
				<svg class="i16" viewBox="0 0 16 16"><path d="M10 2.5H1v9h13V9M7.5 11.5V15M4 15h8" fill="none" stroke="#222" stroke-width="1.2"/><path d="M11.5 1h4v4h-4zM13.5 5v5" fill="none" stroke="#222" stroke-width="1.2"/></svg>
				<svg class="i16" viewBox="0 0 16 16"><path d="M1 6h3l4-4v12l-4-4H1zM10 5.5c1.5 1.5 1.5 3.5 0 5M12 3.5c3 2.5 3 6.5 0 9" fill="none" stroke="#222" stroke-width="1.1"/></svg>
				<svg class="i16" viewBox="0 0 16 16"><path d="M3 5h10.5v8H1V8z" fill="#222" stroke="#222" stroke-width="1.5"/><path d="M15 7.5v3" stroke="#222" stroke-width="1.6"/><path d="M4 0L1 5h3L2 9l5-5.5H4.5z" fill="#222" stroke="#e5eef7" stroke-width=".6"/></svg>
			</div>
			<svg class="i16" viewBox="0 0 16 16"><path d="M1 12c2-2 1-9 6-10 3-.5 5 1 5.5 4 .3 3 .5 4 1.5 6zM5.5 13.5h4c-.5 2-3.5 2-4 0z" fill="#222"/><path d="M5 6h3l-3 4h3.5M11 1h4l-4 4.5h4" fill="none" stroke="#e5eef7" stroke-width="1.6"/><path d="M11.5 1.5H15L11.5 5H15" fill="none" stroke="#222" stroke-width="1.1"/></svg>
		</div>
	</footer>

	<p class="subtitle">所以大家如果想说你填这些</p>
	<div class="key">↖</div>
	<script src="script.js"></script>
</body>
</html>
```
FILE: styles.css
```css
* {
	box-sizing: border-box;
}
body {
	margin: 0;
	height: 100vh;
	display: flex;
	flex-direction: column;
	overflow: hidden;
	position: relative;
	background: linear-gradient(#e8eef1, #e8ebf0 90px, #e6e8ec 190px, #e9eef3 222px, #e9ecef);
	color: #333;
	font: 12px/16px "Open Sans", "Noto Sans CJK SC", sans-serif;
}
button, input, select {
	font: inherit;
	color: inherit;
}
button {
	display: flex;
	align-items: center;
	justify-content: center;
	padding: 0;
	border: 0;
	background: none;
	white-space: nowrap;
}
input[type="text"] {
	flex: 1;
	min-width: 0;
	padding: 0;
	border: 0;
	outline: 0;
	background: none;
}
a {
	color: inherit;
	text-decoration: none;
}
svg {
	flex: none;
}
.sprite {
	display: none;
}
.i8 { width: 8px; height: 8px; }
.i10 { width: 10px; height: 10px; }
.i12 { width: 12px; height: 12px; }
.i14 { width: 14px; height: 14px; }
.i16 { width: 16px; height: 16px; }
.i18 { width: 18px; height: 18px; }
.i24 { width: 24px; height: 24px; }
.i28 { width: 28px; height: 28px; }
.i30 { width: 30px; height: 28px; }
.chev { width: 8px; height: 8px; }

/* title bar */
.titlebar {
	display: grid;
	grid-template-columns: 1fr 366px 1fr;
	align-items: center;
	height: 45px;
	padding: 0 0 2px 16px;
}
.title-left {
	display: flex;
	align-items: center;
}
.autosave {
	display: flex;
	align-items: center;
	gap: 7px;
	margin: 0 11px 0 16px;
}
.autosave input {
	position: absolute;
	opacity: 0;
}
.switch {
	display: flex;
	align-items: center;
	justify-content: space-between;
	width: 42px;
	height: 20px;
	padding: 0 5px 0 3px;
	border: 1px solid #555;
	border-radius: 10px;
	background: #fff;
}
.switch::before {
	content: "";
	width: 13px;
	height: 13px;
	border-radius: 50%;
	background: #5c5c60;
}
.undo, .redo {
	gap: 6px;
}
.undo {
	margin: 0 9px 0 13px;
}
.redo .chev {
	color: #aaa;
}
.custom {
	margin: 0 25px 0 13px;
}
.filename {
	gap: 5px;
}
.search {
	display: flex;
	align-items: center;
	gap: 12px;
	height: 32px;
	padding: 0 12px;
	border: 1px solid #dcdfe2;
	border-bottom-color: #c9ccd0;
	border-radius: 4px;
	background: #fafafa;
	font-size: 13px;
}
input::placeholder {
	color: #666;
	opacity: 1;
}
.title-right {
	display: flex;
	align-items: center;
	justify-content: flex-end;
}
.avatar {
	width: 24px;
	height: 24px;
	margin-right: 12px;
	border-radius: 50%;
	background: #d0d2d4;
}
.win {
	width: 48px;
	height: 32px;
}
.win:last-child {
	width: 46px;
}

/* menu tabs */
.tabs {
	display: flex;
	align-items: center;
	gap: 19px;
	height: 32px;
	padding: 0 10px 0 18px;
	font-family: "Noto Sans", "Noto Sans CJK SC", sans-serif;
	font-size: 13px;
}
.tabs a {
	padding: 2px 0 1px;
	line-height: 20px;
	border-bottom: 2px solid transparent;
}
.tabs .active {
	font-weight: bold;
	border-color: #217346;
	margin-left: 4px;
}
.tabs .addin {
	margin-right: 2px;
	font-size: 14px;
}
.comment, .share {
	gap: 3px;
	height: 24px;
	margin-bottom: 2px;
	border-radius: 4px;
}
.comment {
	width: 54px;
	margin-left: auto;
	border: 1px solid #888;
	background: #fff;
}
.share {
	width: 64px;
	margin-left: -11px;
	background: #107c41;
	color: #fff;
}

/* ribbon */
.ribbon {
	display: flex;
	height: 101px;
	margin: 0 8px;
	border-radius: 8px;
	background: #fff;
	box-shadow: 0 1px 4px rgba(0, 0, 0, .18);
}
.group {
	display: flex;
	flex-direction: column;
	flex: none;
	background: linear-gradient(#cfcfcf, #cfcfcf) right 5px / 1px 91px no-repeat;
}
.borderless {
	background: none;
}
.group .body {
	display: flex;
	height: 80px;
}
.group footer {
	display: grid;
	grid-template-columns: 1fr auto 1fr;
	align-items: center;
	height: 19px;
}
.group footer:has(.launch) {
	grid-template-columns: 1fr auto 1fr 14px;
}
.group footer span {
	grid-column: 2;
}
.launch {
	grid-column: 4;
	justify-content: flex-start;
}
.launch svg {
	width: 9px;
	height: 9px;
	margin-top: 4px;
}
.clipboard { width: 112px; }
.font { width: 280px; }
.align { width: 205px; }
.number { width: 162px; }
.office { width: 113px; }
.styles { width: 204px; }
.cells { width: 94px; }
.editing { width: 202px; }
.tools { width: 227px; }
.slim { width: 58px; }
.convert { width: 110px; }
.clipboard .body { padding-left: 9px; }
.font .body, .align .body, .number .body { padding-left: 7px; }
.office .body { padding-left: 9px; }
.styles .body { padding-left: 3px; }
.cells .body { padding-left: 11px; }
.editing .body { padding-left: 12px; }
.tools .body { padding-left: 10px; }
.slim .body { justify-content: center; }
.convert .body { padding-left: 5px; }

.rows {
	padding-top: 7px;
}
.body.rows {
	flex-direction: column;
}
.row {
	display: flex;
	align-items: center;
	height: 32px;
}
.ib {
	width: 26px;
	height: 24px;
}
.ib.on {
	border: 1px solid #777;
	border-radius: 4px;
	background: #ebebeb;
}
.drop {
	width: 12px;
	height: 24px;
}
.merge .drop {
	width: 20px;
}
.number .drop {
	width: 14px;
}
.sep {
	width: 1px;
	height: 24px;
	margin: 0 3px;
	background: #d2d2d2;
}
.sep.tall {
	height: 62px;
	margin: 11px 6px 0 5px;
}
.number .sep {
	margin: 0;
}
.ib b, .ib u, .ib i {
	font-size: 14px;
}
.ib i {
	font-family: "Liberation Serif", serif;
}
.grow {
	font-size: 17px;
}
.shrink {
	font-size: 14px;
}
.mark {
	width: 7px;
	height: 7px;
	align-self: flex-start;
	margin-top: 3px;
}
.pinyin {
	flex-direction: column;
	font-size: 9px;
	line-height: 10px;
}
.wrap, .dec {
	flex-direction: column;
	font-family: "Liberation Sans", sans-serif;
	font-size: 11px;
	line-height: 11px;
}
.dec {
	font-size: 10px;
	align-items: flex-end;
	padding-right: 4px;
}
.ribbon select {
	appearance: none;
	height: 24px;
	padding: 0 2px;
	border: 1px solid #888;
	border-radius: 4px;
	background: #fff url("data:image/svg+xml,%3Csvg xmlns='http://www.w3.org/2000/svg' width='8' height='8'%3E%3Cpath d='M1 2.5l3 3 3-3' fill='none' stroke='%23444' stroke-width='1.1'/%3E%3C/svg%3E") no-repeat right 2px center;
}
.ribbon .font-name {
	width: 170px;
	margin: 0 2px 0 1px;
}
.ribbon .font-size {
	width: 40px;
	margin-right: 2px;
}
.ribbon .format {
	width: 146px;
	margin-left: 1px;
}
.big {
	flex-direction: column;
	justify-content: flex-start;
	padding-top: 8px;
	line-height: 15px;
}
.big > span:first-of-type {
	margin-top: 4px;
}
.big > .chev {
	margin-top: 4px;
}
.clipboard .big {
	width: 50px;
}
.w40 { width: 40px; }
.w48 { width: 48px; }
.w56 { width: 56px; }
.w58 { width: 58px; }
.w62 { width: 62px; }
.w64 { width: 64px; }
.w70 { width: 70px; }
.stack {
	padding-top: 2px;
}
.small {
	gap: 4px;
	height: 26px;
}
.small .push {
	margin-left: auto;
}
.clipboard .small {
	width: 36px;
	justify-content: flex-start;
	margin-left: 1px;
}
.cells .small {
	min-width: 69px;
	justify-content: flex-start;
}
.editing .stack {
	width: 48px;
}
.editing .small {
	padding-left: 1px;
}
.editing .sum {
	width: 37px;
}
.tools .stack {
	width: 90px;
}
.pdf {
	font-size: 8px;
	font-weight: bold;
	fill: #259258;
}
.collapse {
	align-self: flex-end;
	margin: 0 9px 7px auto;
}

/* formula bar */
.formula-bar {
	display: flex;
	align-items: center;
	height: 44px;
	padding: 0 7px 0 8px;
}
.box {
	display: flex;
	align-items: center;
	height: 26px;
	padding: 0 4px 0 7px;
	border-radius: 4px;
	background: #fff;
	box-shadow: 0 0 1px rgba(0, 0, 0, .35);
}
.box > svg {
	color: #666;
}
.name-box {
	width: 102px;
	font-size: 14px;
}
.dots {
	width: 3px;
	height: 12px;
	margin: 0 9px;
}
.fx {
	width: 85px;
	gap: 10px;
	padding: 0 2px 0 5px;
}
.fx-btn {
	font: italic 18px "Liberation Serif", serif;
}
.fx .dim {
	margin-left: -8px;
	color: #999;
}
.formula {
	flex: 1;
	margin-left: 5px;
	padding: 0 4px 2px 10px;
	font: 13px "Liberation Mono", "Noto Sans CJK SC", monospace;
}

/* sheet */
.sheet {
	display: flex;
	flex: 1;
	min-height: 0;
}
.grid-view {
	position: relative;
	flex: 1;
	min-width: 0;
	overflow: hidden;
	background: #fff;
}
#grid {
	table-layout: fixed;
	width: 1917px;
	height: 100%;
	border-spacing: 0;
	color: #111;
	font: 300 19px/22px "Noto Sans CJK SC", sans-serif;
}
#grid th, #grid td {
	position: relative;
	padding: 2px 0 0;
	border-right: 1px solid #dcdcdc;
	border-bottom: 1px solid #e4e4e4;
	white-space: nowrap;
}
#grid th {
	background: #efefef;
	color: #4c4c4c;
	font-weight: 300;
}
#grid thead tr {
	height: 24px;
}
#grid thead th {
	padding-top: 1px;
	border-bottom-color: #bdbdbd;
}
#grid .num {
	width: 37px;
	border-right-color: #a0a0a0;
	border-bottom-color: #e8e8e8;
}
#grid .corner {
	background: linear-gradient(135deg, #efefef 50%, #dedede 50%) 19px 4px / 14px 14px no-repeat #efefef;
}
#grid thead .hot {
	padding-top: 0;
	background: #dfdfdf;
	border-bottom: 2px solid #217346;
	color: #217346;
}
#grid .num.hot {
	background: #dedede;
	border-right: 2px solid #217346;
	color: #217346;
}
#grid td {
	padding-left: 3px;
}
#grid td.center {
	padding-left: 1px;
	text-align: center;
}
#grid td.right {
	padding-right: 3px;
	text-align: right;
}
#grid .last {
	height: 6px;
}
#grid .last th, #grid .last td {
	padding: 0;
}
/* the selected cell */
#grid td.selected::before {
	content: "";
	position: absolute;
	inset: -2px;
	border: 2px solid #217346;
}
#grid td.selected::after {
	content: "";
	position: absolute;
	right: -3px;
	bottom: -3px;
	width: 6px;
	height: 6px;
	background: #217346;
	border: solid #fff;
	border-width: 1px 0 0 1px;
}
#grid td.error::before {
	content: "";
	position: absolute;
	top: 0;
	left: 0;
	border: solid transparent;
	border-width: 0 8px 8px 0;
	border-top: 8px solid #128a1c;
	border-bottom: 0;
}
.cursor {
	position: absolute;
	left: 642px;
	top: 109px;
	width: 22px;
	height: 22px;
}
.vscroll {
	display: flex;
	flex-direction: column;
	align-items: center;
	gap: 5px;
	width: 20px;
	padding: 5px 0 1px 2px;
	background: #f3f3f4;
}
.vscroll .thumb {
	width: 9px;
	flex: 1;
	margin-bottom: 19px;
	border-radius: 5px;
	background: #6a6a6c;
}

/* sheet tabs */
.sheet-tabs {
	display: flex;
	align-items: center;
	height: 31px;
	padding: 0 22px 0 16px;
	background: #e6e9ee;
	font-size: 14px;
}
.step {
	width: 32px;
}
.sheet-tabs a {
	padding: 0 13px 0 12px;
	border-right: 1px solid #c4c6ca;
}
.sheet-tabs .current {
	align-self: flex-start;
	height: 27px;
	margin: 0 5px 0 36px;
	padding: 1px 8px 0;
	border: 0;
	border-radius: 0 0 4px 4px;
	background: #fff;
}
.current span {
	display: block;
	line-height: 22px;
	border-bottom: 2px solid #217346;
}
.add {
	margin-left: 42px;
}
.hscroll {
	display: flex;
	align-items: center;
	flex: 1;
	justify-content: flex-end;
}
.hscroll .dots {
	margin-right: 20px;
}
.hscroll .thumb {
	width: 688px;
	height: 10px;
	margin: 0 12px 0 4px;
	border-radius: 5px;
	background: #6f7173;
}

/* status bar */
.status {
	display: flex;
	align-items: center;
	height: 24px;
	padding: 0 7px 0 12px;
	border-bottom: 1px solid #c5c5c5;
	background: #f3f2f3;
}
.ready {
	margin-right: 19px;
}
.access {
	gap: 3px;
	margin-left: 18px;
}
.views {
	display: flex;
	align-items: center;
	margin-left: auto;
}
.view {
	width: 40px;
	height: 23px;
}
.view.on {
	background: #e0dfe2;
}
.zoom-step {
	width: 16px;
	font-size: 16px;
}
.views input {
	appearance: none;
	width: 100px;
	height: 12px;
	margin: 0 2px;
	background: linear-gradient(#777, #777) center / 100% 1px no-repeat;
}
.views input::-webkit-slider-thumb {
	appearance: none;
	width: 5px;
	height: 12px;
	background: #555;
}
.percent {
	margin-left: 10px;
}

/* taskbar */
.taskbar {
	display: grid;
	grid-template-columns: 1fr auto 1fr;
	align-items: center;
	height: 45px;
	padding: 0 18px 0 20px;
	background: linear-gradient(90deg, #e3eef6, #e2eef6 15%, #cfdff6 24%, #d9def5 32%, #dadff3 65%, #d2e2f6 70%, #d8daee 75%, #e2edf7 80%, #e2edf6);
}
.weather {
	justify-self: start;
	gap: 4px;
	text-align: left;
	color: #111;
}
.weather > span > span {
	display: block;
}
.weather .muted {
	color: #555;
}
.thermo {
	width: 26px;
	height: 28px;
}
.badge {
	fill: #fff;
	font-size: 11px;
	text-anchor: middle;
}
.apps {
	display: flex;
	align-items: center;
}
.app {
	position: relative;
	width: 44px;
	height: 45px;
}
.open::after {
	content: "";
	position: absolute;
	bottom: 3px;
	width: 6px;
	height: 3px;
	border-radius: 2px;
	background: #81858d;
}
.front {
	width: 38px;
	height: 39px;
	margin: 0 3px;
	border-radius: 4px;
	background: #eff3fb;
}
.front::after {
	bottom: 0;
	width: 16px;
	background: #1c78bd;
}
.task-search {
	display: flex;
	align-items: center;
	gap: 10px;
	width: 218px;
	height: 31px;
	margin: 0 3px 0 4px;
	padding: 0 5px 0 10px;
	border: 1px solid #e0e6f2;
	border-radius: 16px;
	background: #f3f7fd;
	font-size: 14px;
}
.lion {
	width: 42px;
	height: 26px;
}
.tray {
	display: flex;
	align-items: center;
	justify-content: flex-end;
	gap: 16px;
	color: #222;
}
.ime {
	font-size: 15px;
}
.quick {
	display: flex;
	gap: 9px;
}

/* caption and key hint over the window */
.subtitle {
	position: absolute;
	left: 0;
	right: 0;
	bottom: 121px;
	margin: 0;
	color: #fff;
	font: 500 56px/56px "Noto Sans CJK SC", sans-serif;
	text-align: center;
	white-space: nowrap;
	-webkit-text-stroke: 7px #000;
	stroke-linejoin: round;
	paint-order: stroke fill;
}
.key {
	position: absolute;
	right: 66px;
	bottom: 94px;
	width: 105px;
	height: 32px;
	padding-left: 8px;
	overflow: hidden;
	border: 2px solid #111;
	border-width: 2px 12px 0 2px;
	border-radius: 18px 18px 0 0;
	background: linear-gradient(100deg, #3c3c3c, #575757);
	color: #eee;
	font-size: 16px;
	line-height: 46px;
	text-align: center;
}
```
FILE: script.js
```js
var columns = "ABCDEFGHIJKLMNOPQRST".split("");
var rowCount = 29;
var activeColumn = "H";
var activeRow = 5;

var cells = {
	A1: { text: "100", style: "center" },
	A2: { text: "100", style: "center" },
	A3: { text: "A1", style: "center" },
	C4: { text: "A1" },
	C6: { text: "100", style: "right" },
	F4: { text: "表1" },
	F5: { text: "表1-1" },
	F6: { text: "表2" },
	G4: { text: "我是表1" },
	G5: { text: "#REF!", style: "center error" },
	G6: { text: "我是表2" },
	H4: { text: "我是表1" },
	H5: { text: "我是表1-1", style: "selected" },
	I5: { text: "表1-1!A1" },
	I6: { text: "!A1" },
	J15: { text: "1.去掉双引号，把常量改为变量", span: 3 },
	J16: { text: "2.区分常量和变量", span: 2 }
};

function drawHead() {
	var html = '<tr><th class="num corner"></th>';
	columns.forEach(function (name) {
		html += `<th class="${name === activeColumn ? "hot" : ""}">${name}</th>`;
	});
	return html + "</tr>";
}

function drawRow(row) {
	var html = `<tr><th class="num ${row === activeRow ? "hot" : ""}">${row}</th>`;
	for (var i = 0; i < columns.length; i++) {
		var cell = cells[columns[i] + row] || { text: "" };
		var span = cell.span || 1;
		html += `<td class="${cell.style || ""}" colspan="${span}">${cell.text}</td>`;
		i += span - 1;
	}
	return html + "</tr>";
}

function drawGrid() {
	var body = "";
	for (var row = 1; row <= rowCount; row++) {
		body += drawRow(row);
	}
	// sliver of the next row above the sheet tabs
	body += '<tr class="last"><th class="num"></th>' + "<td></td>".repeat(columns.length) + "</tr>";
	document.getElementById("grid").innerHTML = "<thead>" + drawHead() + "</thead><tbody>" + body + "</tbody>";
}

drawGrid();
```
